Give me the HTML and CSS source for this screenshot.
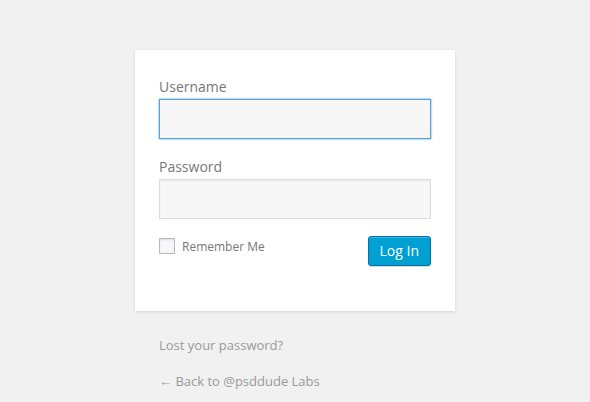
FILE: index.html
```html
<!DOCTYPE html>
<html lang="en">
<head>
<meta charset="utf-8">
<title>Log In</title>
<link rel="stylesheet" href="styles.css">
</head>
<body>
<div class="login">
  <form class="card">
    <label class="field-label" for="user">Username</label>
    <input class="field focused" id="user" type="text">
    <label class="field-label" for="pass">Password</label>
    <input class="field" id="pass" type="password">
    <div class="actions">
      <label class="remember"><input class="check" type="checkbox"> Remember Me</label>
      <button class="btn" type="button">Log In</button>
    </div>
  </form>
  <p class="nav first"><a href="#">Lost your password?</a></p>
  <p class="nav"><a href="#">← Back to @psddude Labs</a></p>
</div>
</body>
</html>
```
FILE: styles.css
```css
html, body {
  margin: 0;
  padding: 0;
  background: #f1f1f1;
  font-family: "Open Sans", "Liberation Sans", sans-serif;
}
.login {
  width: 320px;
  margin: 50px auto 0;
}
.card {
  background: #fff;
  box-shadow: 0 1px 3px rgba(0,0,0,.13);
  padding: 27px 24px 45px;
  display: flex;
  flex-direction: column;
}
.field-label {
  display: block;
  font-size: 14px;
  line-height: 19px;
  color: #777;
  margin-bottom: 3px;
}
.field {
  box-sizing: border-box;
  width: 100%;
  height: 40px;
  margin: 0 0 18px;
  padding: 3px;
  font-size: 24px;
  background: #f7f7f7;
  border: 1px solid #ddd;
  box-shadow: inset 0 1px 2px rgba(0,0,0,.07);
  outline: none;
  font-family: inherit;
}
.field:last-of-type {
  margin-bottom: 17px;
}
.field.focused {
  border-color: #5b9dd9;
  box-shadow: 0 0 2px rgba(30,140,190,.8);
}
.actions {
  display: flex;
  justify-content: space-between;
  align-items: flex-start;
  height: 30px;
}
.remember {
  display: flex;
  align-items: center;
  gap: 7px;
  font-size: 12px;
  line-height: 16px;
  color: #777;
  margin-top: 3px;
}
.check {
  appearance: none;
  -webkit-appearance: none;
  margin: 0;
  width: 16px;
  height: 16px;
  box-sizing: border-box;
  border: 1px solid #b4b9be;
  background: #f7f7f7;
  box-shadow: inset 0 1px 2px rgba(0,0,0,.1);
  position: relative;
  top: -1px;
}
.btn {
  box-sizing: border-box;
  height: 30px;
  line-height: 26px;
  padding: 0 11px 1px;
  font-family: inherit;
  font-size: 14px;
  color: #fff;
  background: #00a0d2;
  border: 1px solid #0073aa;
  border-radius: 3px;
  box-shadow: inset 0 1px 0 rgba(120,200,230,.5), 0 1px 0 rgba(0,0,0,.15);
}
.nav {
  margin: 16px 0 0;
  padding: 0 24px;
  font-size: 13px;
  line-height: 20px;
}
.nav.first {
  margin-top: 24px;
}
.nav a {
  color: #999;
  text-decoration: none;
}
```
